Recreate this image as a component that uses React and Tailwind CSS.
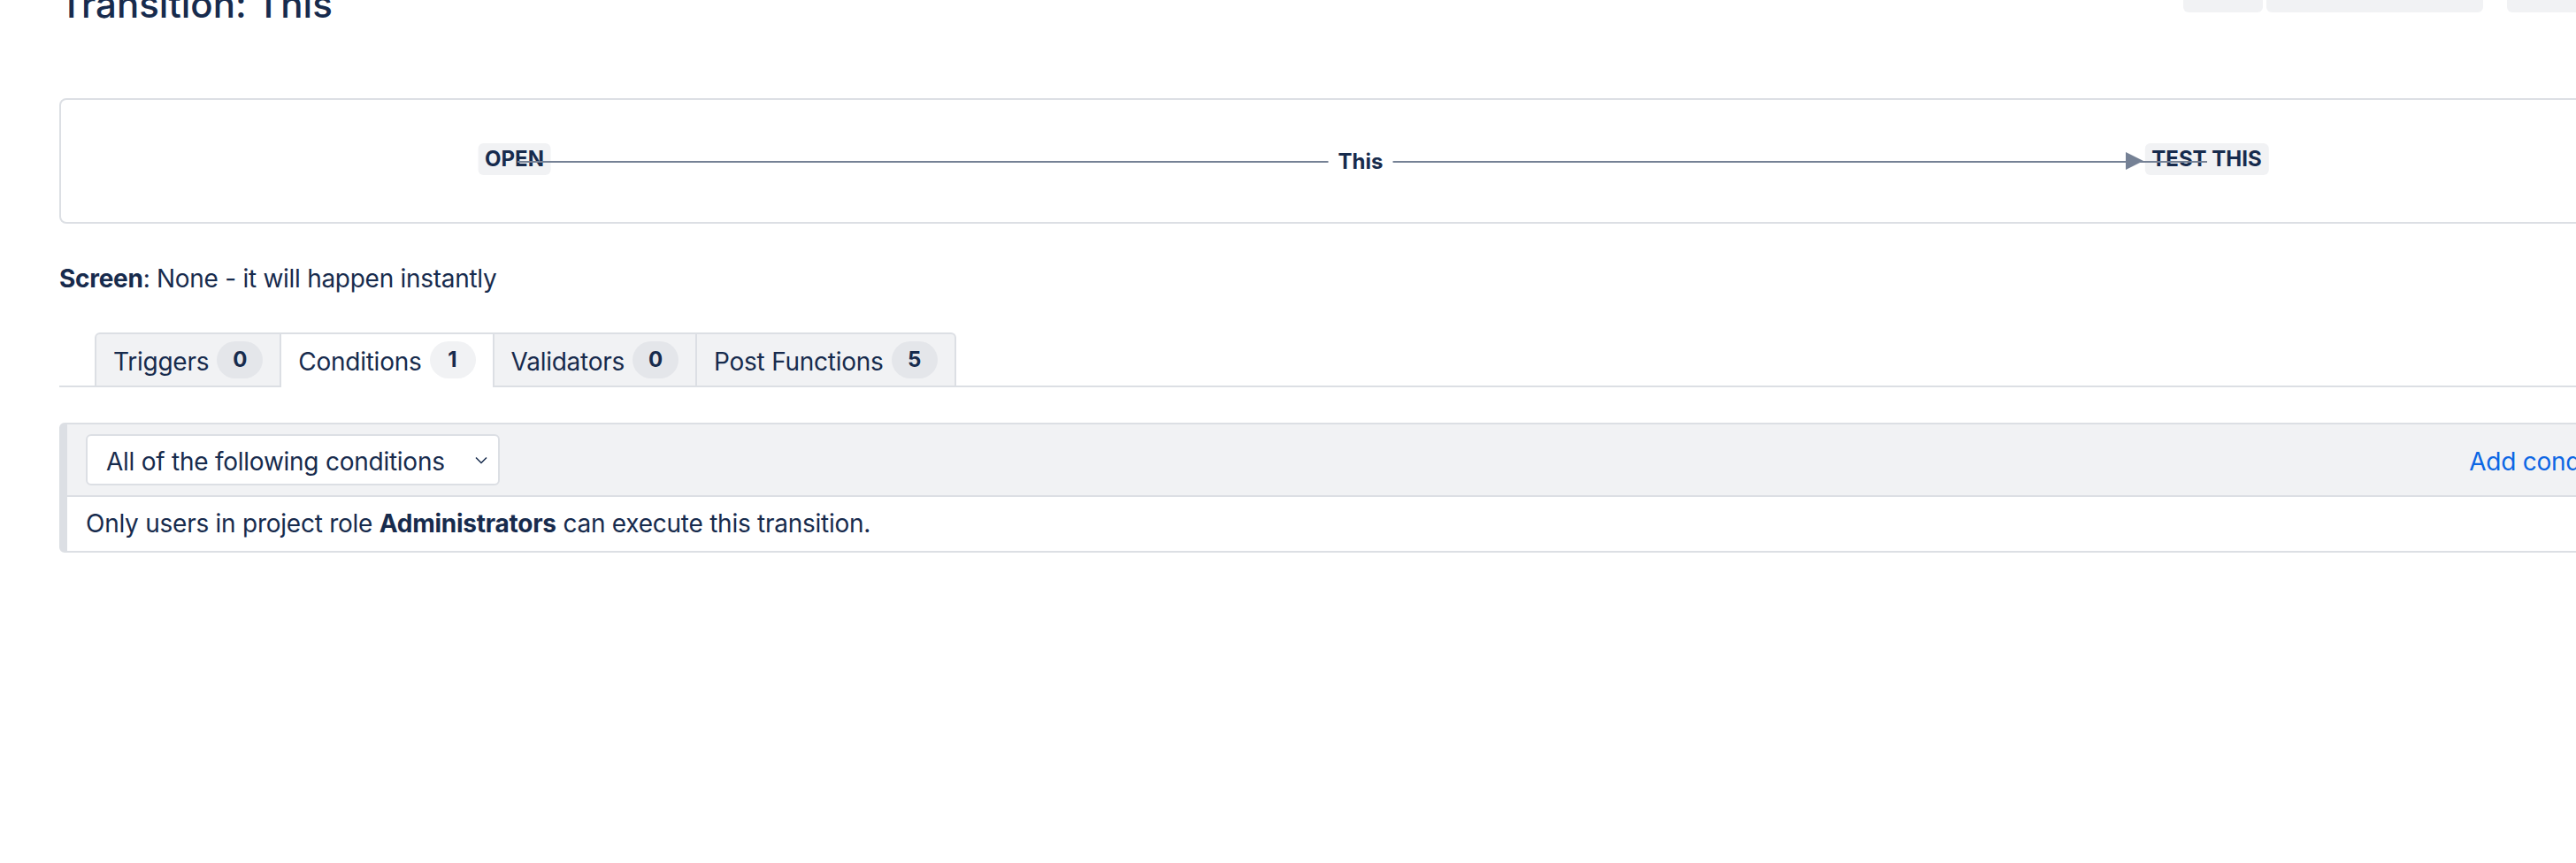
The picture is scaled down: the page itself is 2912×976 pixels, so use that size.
import { useState } from "react";

const tabs = [
  { name: "Triggers", count: 0 },
  { name: "Conditions", count: 1 },
  { name: "Validators", count: 0 },
  { name: "Post Functions", count: 5 },
];

function Tab({ tab, active, first, last, onClick }) {
  return (
    <button
      onClick={onClick}
      className={
        "flex items-center gap-[9px] px-[19px] border-t-2 border-r-2 border-[#dcdfe4] text-[28px] leading-[40px] tracking-[-0.25px] " +
        (first ? "border-l-2 rounded-tl-[6px] " : "") +
        (last ? "rounded-tr-[6px] " : "") +
        (active ? "h-[62px] -mb-[2px] pb-[2px] bg-white" : "h-[60px] bg-[#f1f2f4]")
      }
    >
      <span className="pt-[4px]">{tab.name}</span>
      <span
        className={
          "h-[42px] min-w-[52px] px-[16px] rounded-full flex items-center justify-center font-bold text-[24px] tracking-normal " +
          (active ? "bg-[#f1f2f4]" : "bg-[#e4e6ea]")
        }
      >
        {tab.count}
      </span>
    </button>
  );
}

export default function App() {
  const [activeTab, setActiveTab] = useState("Conditions");

  return (
    <div className="w-[2912px] h-[976px] overflow-hidden bg-white text-[#172b4d] font-['Inter',sans-serif]">
      <div className="w-[2942px] ml-[67px] -mt-[50px]">
        {/* header */}
        <div className="flex justify-between items-start">
          <h1 className="mt-[30px] text-[42px] leading-[50px] font-medium">Transition: This</h1>
          <div className="flex">
            <div className="w-[90px] h-[64px] rounded-[6px] bg-[#f1f2f4]"></div>
            <div className="ml-[4px] w-[245px] h-[64px] rounded-[6px] bg-[#f1f2f4]"></div>
            <div className="ml-[27px] w-[175px] h-[64px] rounded-[6px] bg-[#f1f2f4]"></div>
          </div>
        </div>

        {/* diagram */}
        <div className="mt-[81px] h-[142px] border-2 border-[#dcdfe4] rounded-[8px] flex justify-center">
          <div className="relative mt-[49px] w-[1913px] h-[36px]">
            <div className="absolute left-0 top-0 -translate-x-1/2 h-[36px] px-[8px] rounded-[6px] bg-[#f1f2f4] font-bold text-[24px] leading-[36px] whitespace-nowrap">
              OPEN
            </div>
            <div className="absolute left-full top-0 -translate-x-1/2 h-[36px] px-[8px] rounded-[6px] bg-[#f1f2f4] font-bold text-[24px] leading-[36px] whitespace-nowrap">
              TEST THIS
            </div>
            <svg className="absolute left-0 top-0 overflow-visible" width="1913" height="36">
              <line x1="3" y1="21" x2="1913" y2="21" stroke="#758195" strokeWidth="2" />
              <polygon points="1821,10 1841,20 1821,30" fill="#758195" />
            </svg>
            <div className="absolute left-1/2 top-[21px] -translate-x-1/2 -translate-y-1/2 bg-white px-[11px] font-bold text-[24px] leading-[28px]">
              This
            </div>
          </div>
        </div>

        {/* screen */}
        <p className="mt-[42px] text-[28px] leading-[40px] tracking-[-0.28px]">
          <span className="font-bold">Screen</span>: None - it will happen instantly
        </p>

        {/* tabs */}
        <div className="mt-[41px] flex items-end pl-[40px] border-b-2 border-[#dcdfe4]">
          {tabs.map((t, i) => (
            <Tab
              key={t.name}
              tab={t}
              first={i === 0}
              last={i === tabs.length - 1}
              active={activeTab === t.name}
              onClick={() => setActiveTab(t.name)}
            />
          ))}
        </div>

        {/* conditions panel */}
        <div className="mt-[40px] border-2 border-l-[9px] border-[#dcdfe4] rounded-[6px] overflow-hidden">
          <div className="flex items-center justify-between bg-[#f1f2f4] pl-[21px] pr-[35px] py-[11px] border-b-2 border-[#dcdfe4]">
            <button className="h-[58px] w-[468px] border-2 border-[#dcdfe4] rounded-[6px] bg-white flex items-center justify-between pl-[21px] pr-[12px] text-[28px] leading-[40px] tracking-[-0.25px]">
              <span className="pt-[3px]">All of the following conditions</span>
              <svg width="14" height="9" viewBox="0 0 14 9" fill="none">
                <path d="M1 1.5 L7 7.5 L13 1.5" stroke="#172b4d" strokeWidth="1.5" />
              </svg>
            </button>
            <a className="text-[28px] leading-[40px] text-[#0c66e4] pt-[3px] tracking-[-0.25px]">Add condition</a>
          </div>
          <div className="pl-[21px] pt-[10px] pb-[11px] text-[28px] leading-[40px] tracking-[-0.25px]">
            Only users in project role <span className="font-bold">Administrators</span> can execute this transition.
          </div>
        </div>
      </div>
    </div>
  );
}
